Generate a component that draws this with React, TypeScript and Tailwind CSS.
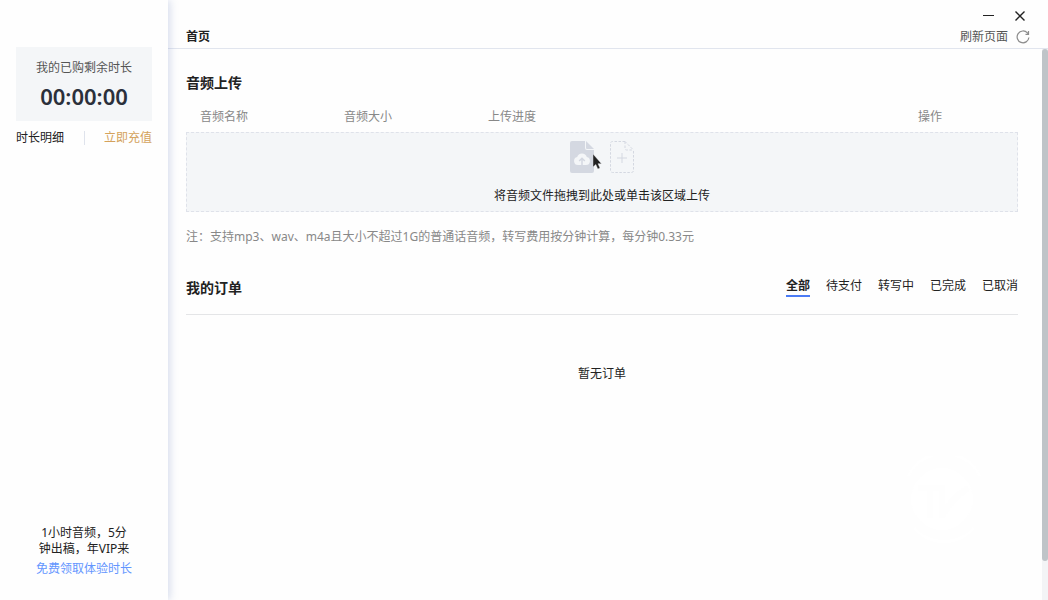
import { useState } from "react";
import clsx from "clsx";

const columns = [
  { title: "音频名称", width: "w-36" },
  { title: "音频大小", width: "w-36" },
  { title: "上传进度", width: "" },
  { title: "操作", width: "w-[114px]" },
];

const tabs = ["全部", "待支付", "转写中", "已完成", "已取消"];

function Sidebar() {
  return (
    <aside className="relative z-10 flex w-[168px] shrink-0 flex-col justify-between bg-[#fefefe] px-4 pt-[47px] pb-[23px] shadow-[2px_0_8px_rgba(130,150,200,0.32)]">
      <div>
        <div className="flex flex-col items-center bg-[#f4f6f8] pt-[13px] pb-2">
          <span className="leading-4 text-[#555]">我的已购剩余时长</span>
          <span className="mt-[3px] text-[22px] leading-[34px] font-semibold text-[#2b303b]">00:00:00</span>
        </div>
        <div className="mt-[9px] flex items-center justify-between leading-4">
          <button type="button">时长明细</button>
          <span className="h-[14px] w-px bg-[#dfe3ec]" />
          <button type="button" className="text-[#d4a25c]">
            立即充值
          </button>
        </div>
      </div>
      <div className="px-5 text-center leading-4">
        <p>1小时音频，5分钟出稿，年VIP来</p>
        <a href="#trial" className="-mx-1 mt-1 block whitespace-nowrap text-[#6496ff]">
          免费领取体验时长
        </a>
      </div>
    </aside>
  );
}

function Header() {
  return (
    <header className="border-b border-[#e1e5ee] pb-[3px]">
      <div className="flex h-[29px] items-center justify-end gap-4 pt-[3px] pr-5">
        <button type="button" aria-label="最小化" className="size-4">
          <svg viewBox="0 0 16 16" className="size-4" stroke="#222" fill="none">
            <path d="M3 7.500h11" />
          </svg>
        </button>
        <button type="button" aria-label="关闭" className="size-4">
          <svg viewBox="0 0 16 16" className="size-4" stroke="#222" strokeWidth="1.400" fill="none">
            <path d="M3.500 3.500l9 9M12.500 3.500l-9 9" />
          </svg>
        </button>
      </div>
      <div className="flex h-4 items-center justify-between pr-[18px] pl-[18px]">
        <h1 className="font-bold">首页</h1>
        <button type="button" className="flex items-center gap-2 text-[#555]">
          刷新页面
          <svg viewBox="0 0 14 14" className="size-[14px]" fill="none" stroke="#8c8c8c" strokeWidth="1.200">
            <path d="M12.900 7.500a5.900 5.900 0 1 1-1.500-4.600l1 1.100" />
            <path d="M12.500 1v3.400H9.500" />
          </svg>
        </button>
      </div>
    </header>
  );
}

function UploadIcon() {
  return (
    <svg viewBox="0 0 24 32" className="h-8 w-6">
      <path d="M2 0h13v7a2 2 0 0 0 2 2h7v21a2 2 0 0 1-2 2H2a2 2 0 0 1-2-2V2a2 2 0 0 1 2-2z" fill="#d4d8e1" />
      <path d="M16 0l8 8h-7a1 1 0 0 1-1-1z" fill="#d4d8e1" />
      <path d="M8 24a4 4 0 0 1-.8-7.900 5 5 0 0 1 9.600 0A4 4 0 0 1 16 24z" fill="#f4f6f8" />
      <path d="M12 24v-6.500M9.200 20l2.800-2.800 2.800 2.800" fill="none" stroke="#d4d8e1" strokeWidth="1.500" />
    </svg>
  );
}

function AddIcon() {
  return (
    <svg viewBox="0 0 24 32" className="h-8 w-6" fill="none" stroke="#d4d8e1">
      <path
        d="M15 .5H2.500a2 2 0 0 0-2 2v27a2 2 0 0 0 2 2h19a2 2 0 0 0 2-2V9.500M15 .5l8.500 8.500M15 .5v7a1.500 1.500 0 0 0 1.500 1.500h7"
        strokeDasharray="2.500 1.500"
      />
      <path d="M12 12v10M7 17h10" />
    </svg>
  );
}

function Pointer() {
  return (
    <svg viewBox="0 0 10 17" className="pointer-events-none absolute top-[13px] left-[23px] h-[17px] w-[10px]">
      <path d="M0 0v13l2.800-2.500 2 4.500 2.200-1-2-4.300h3.500z" fill="#222" stroke="#f4f6f8" strokeWidth=".4" />
    </svg>
  );
}

function Upload() {
  return (
    <section>
      <h2 className="text-sm leading-5 font-bold">音频上传</h2>
      <table className="mt-[14px] w-full table-fixed text-left text-[#888]">
        <thead>
          <tr>
            {columns.map((col) => (
              <th key={col.title} className={clsx("px-[14px] pb-[5px] leading-5 font-normal", col.width)}>
                {col.title}
              </th>
            ))}
          </tr>
        </thead>
      </table>
      <label className="flex h-20 cursor-pointer flex-col items-center border border-dashed border-[#dfe2ea] bg-[#f4f6f8] pt-2">
        <input type="file" accept=".mp3,.wav,.m4a" className="sr-only" />
        <span className="flex gap-4">
          <span className="relative">
            <UploadIcon />
            <Pointer />
          </span>
          <AddIcon />
        </span>
        <span className="mt-[15px] leading-4">将音频文件拖拽到此处或单击该区域上传</span>
      </label>
      <p className="mt-4 leading-[18px] text-[#888]">
        注：支持mp3、wav、m4a且大小不超过1G的普通话音频，转写费用按分钟计算，每分钟0.33元
      </p>
    </section>
  );
}

function Orders() {
  const [active, setActive] = useState(tabs[0]);

  return (
    <section className="mt-8">
      <div className="flex items-start justify-between border-b border-[#e4e5e7] pb-4">
        <h2 className="text-sm leading-5 font-bold">我的订单</h2>
        <nav className="flex gap-4">
          {tabs.map((tab) => (
            <button
              key={tab}
              type="button"
              onClick={() => setActive(tab)}
              className={clsx(
                "border-b-2 pb-px leading-4",
                tab === active ? "border-[#4b7bf5] font-bold" : "border-transparent",
              )}
            >
              {tab}
            </button>
          ))}
        </nav>
      </div>
      <p className="mt-[51px] text-center leading-4">暂无订单</p>
    </section>
  );
}

// Barely visible brand mark in the page corner
function Watermark() {
  return (
    <svg
      viewBox="0 0 80 90"
      className="pointer-events-none absolute right-[62px] bottom-[54px] h-[90px] w-20"
      fill="none"
      stroke="#fff"
    >
      <circle cx="36" cy="43" r="31" fill="#fff" stroke="none" />
      <path d="M12 32h24v30M24 32v30M36 60c8-14 16-22 26-28" stroke="#fefefe" strokeWidth="6" />
      <path d="M2 20a40 40 0 0 1 72 0M8 72a40 40 0 0 0 60 0" strokeWidth="3" />
    </svg>
  );
}

export default function App() {
  return (
    <div className="relative flex min-h-screen bg-[#fefefe] font-['Noto_Sans','Noto_Sans_CJK_SC',sans-serif] text-xs text-[#222]">
      <Sidebar />
      <div className="flex min-w-0 flex-1 flex-col">
        <Header />
        <div className="flex flex-1">
          <main className="min-w-0 flex-1 pt-6 pr-6 pl-[18px]">
            <Upload />
            <Orders />
          </main>
          <div className="w-[6px] shrink-0 bg-[#f3f4f6]">
            <div className="h-[93%] rounded-full bg-[#bfc4c8]" />
          </div>
        </div>
      </div>
      <Watermark />
    </div>
  );
}
